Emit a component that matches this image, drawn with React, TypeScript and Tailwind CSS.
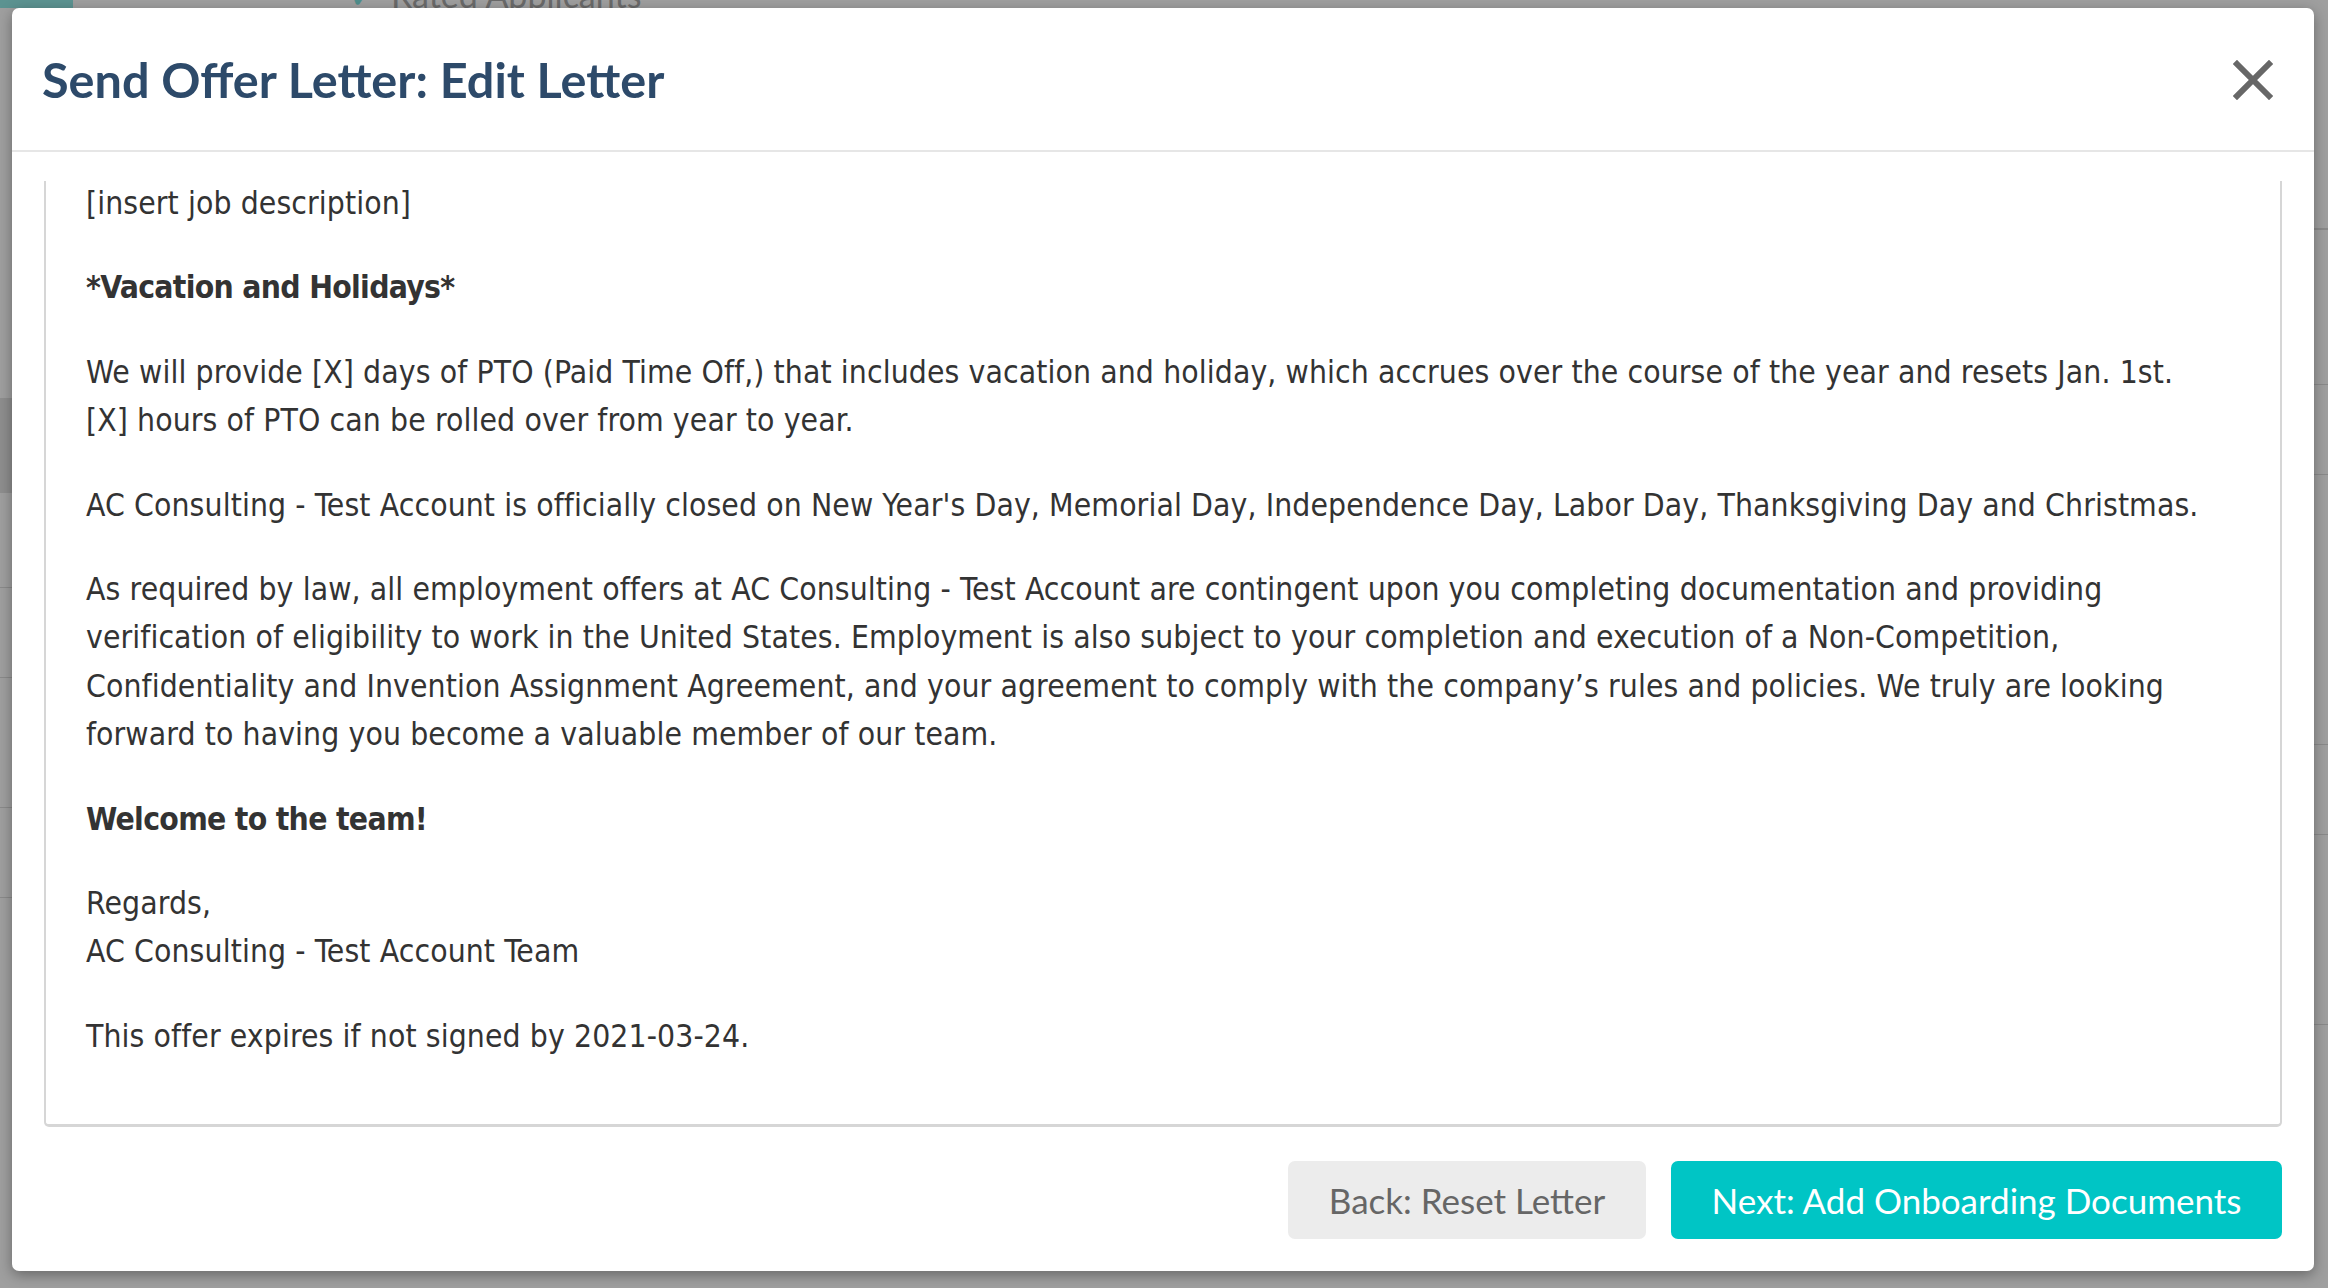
import React from 'react';

const bodyFont = { fontFamily: '"DejaVu Sans Condensed", "DejaVu Sans", sans-serif' };
const uiFont = { fontFamily: 'Lato, "Open Sans", sans-serif' };

// page behind the dimmed overlay, mostly covered by the modal
const Backdrop: React.FC = () => (
  <div className="absolute inset-0 flex flex-col bg-[#9f9f9f]">
    <div className="h-[8px] shrink-0 flex items-start overflow-visible">
      <div className="w-[73px] h-full bg-[#5c9391]" />
      <div className="ml-[276px] -mt-[22px] flex items-center gap-[14px] text-[34px] leading-none whitespace-nowrap" style={uiFont}>
        <span className="text-[#4f8e8c]">✓</span>
        <span className="text-[#6a6a6a]">Rated Applicants</span>
      </div>
    </div>
    <div className="flex-1 flex justify-between">
      <div className="w-[12px] flex flex-col pt-[390px]">
        <div className="h-[95px] bg-[#8e8e8e]" />
        <div className="h-[95px] border-b border-[#8a8a8a]" />
        <div className="h-[90px] border-b border-[#8a8a8a]" />
        <div className="h-[130px] border-b border-[#8a8a8a]" />
        <div className="h-[90px] border-b border-[#8a8a8a]" />
      </div>
      <div className="w-[14px] flex flex-col pt-[220px]">
        <div className="h-[2px] bg-[#8a8a8a]" />
        <div className="h-[155px] border-b border-[#8a8a8a]" />
        <div className="h-[90px] border-b border-[#8a8a8a]" />
        <div className="h-[270px] border-b border-[#8a8a8a]" />
        <div className="h-[90px] border-b border-[#8a8a8a]" />
        <div className="h-[190px] border-b border-[#8a8a8a]" />
      </div>
    </div>
  </div>
);

const Para: React.FC<{ lines: string[]; bold?: boolean }> = ({ lines, bold }) => (
  <div className={`mb-[36px] ${bold ? 'font-bold tracking-[-0.7px]' : 'tracking-[0.1px]'}`}>
    {lines.map((l, i) => (
      <div key={i} className="whitespace-nowrap">{l}</div>
    ))}
  </div>
);

export default function App() {
  return (
    <div className="relative w-[2328px] h-[1288px] overflow-hidden">
      <Backdrop />
      <div className="absolute left-[12px] top-[8px] w-[2302px] h-[1263px] bg-white rounded-[7px] shadow-[0_4px_14px_rgba(0,0,0,0.35)] flex flex-col">
        <div className="h-[144px] shrink-0 flex items-center justify-between pl-[30px] pr-[41px] border-b-2 border-[#e6e6e6]">
          <h1 className="text-[48.6px] font-bold text-[#2d4a6a]" style={uiFont}>
            Send Offer Letter: Edit Letter
          </h1>
          <svg width="40" height="40" viewBox="0 0 40 40" className="mt-[2px]">
            <path d="M4 4 L36 36 M36 4 L4 36" stroke="#676767" strokeWidth="6" strokeLinecap="square" />
          </svg>
        </div>
        <div className="flex-1 flex flex-col px-[32px] pt-[29px] pb-[33px]">
          <div className="h-[946px] shrink-0 overflow-hidden border-x-2 border-b-[3px] border-[#d6d6d6] rounded-b-[5px] pl-[40px] text-[31.6px] leading-[48.4px] text-[#333]" style={bodyFont}>
            <div className="-mt-[2px]">
              <Para lines={['[insert job description]']} />
              <Para bold lines={['*Vacation and Holidays*']} />
              <Para
                lines={[
                  'We will provide [X] days of PTO (Paid Time Off,) that includes vacation and holiday, which accrues over the course of the year and resets Jan. 1st.',
                  '[X] hours of PTO can be rolled over from year to year.',
                ]}
              />
              <Para
                lines={[
                  "AC Consulting - Test Account is officially closed on New Year's Day, Memorial Day, Independence Day, Labor Day, Thanksgiving Day and Christmas.",
                ]}
              />
              <Para
                lines={[
                  'As required by law, all employment offers at AC Consulting - Test Account are contingent upon you completing documentation and providing',
                  'verification of eligibility to work in the United States. Employment is also subject to your completion and execution of a Non-Competition,',
                  'Confidentiality and Invention Assignment Agreement, and your agreement to comply with the company\u2019s rules and policies. We truly are looking',
                  'forward to having you become a valuable member of our team.',
                ]}
              />
              <Para bold lines={['Welcome to the team!']} />
              <Para lines={['Regards,', 'AC Consulting - Test Account Team']} />
              <Para lines={['This offer expires if not signed by 2021-03-24.']} />
            </div>
          </div>
          <div className="mt-[34px] flex justify-end gap-[25px]" style={uiFont}>
            <button className="w-[358px] h-[78px] rounded-[7px] bg-[#ececec] text-[#666] text-[35px]">
              Back: Reset Letter
            </button>
            <button className="w-[611px] h-[78px] rounded-[7px] bg-[#00c5c5] text-white text-[35px]">
              Next: Add Onboarding Documents
            </button>
          </div>
        </div>
      </div>
    </div>
  );
}
